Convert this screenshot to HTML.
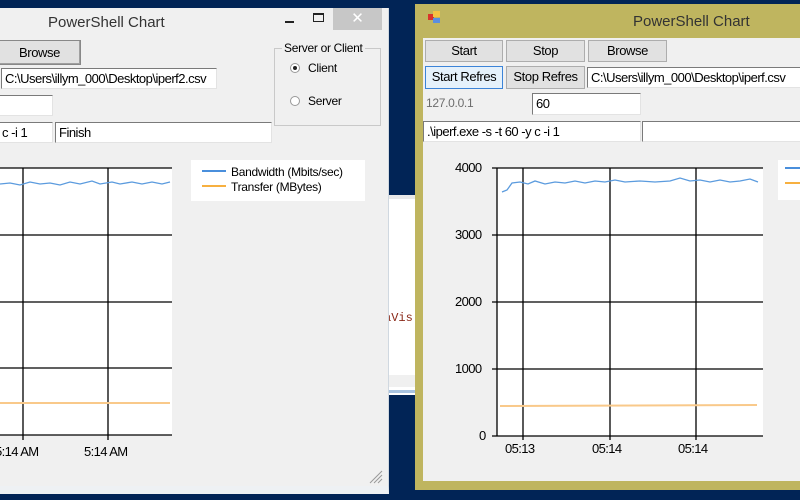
<!DOCTYPE html>
<html><head><meta charset="utf-8"><style>
*{margin:0;padding:0;box-sizing:border-box}
body{width:800px;height:500px;background:#012456;position:relative;overflow:hidden;font-family:"Liberation Sans",sans-serif;font-size:12px;color:#000}
.a{position:absolute}
.btn{position:absolute;background:#e1e1e1;border:1px solid #adadad;text-align:center;line-height:20px;font-size:13px;letter-spacing:-0.4px}
.tb{position:absolute;background:#fff;border:1px solid #7a7a7a;border-right-color:#e3e3e3;border-bottom-color:#e3e3e3;padding-left:3px;line-height:17px;white-space:nowrap;overflow:hidden;font-size:13px;letter-spacing:-0.5px}
.lbl{position:absolute;font-size:12px;letter-spacing:-0.3px}
</style></head><body>
<div class="a" style="left:386px;top:195px;width:32px;height:200px;background:#fff;border-top:4px solid #e8e8e8"></div>
<div class="a" style="left:386px;top:375px;width:32px;height:12px;background:#f0f0f0"></div>
<div class="a" style="left:386px;top:390px;width:32px;height:3px;background:#a8c3e0"></div>
<div class="a" style="left:384px;top:311px;color:#8b2a1a;font-family:'Liberation Mono',monospace;font-size:12px">aVis</div>
<div class="a" style="left:0;top:8px;width:389px;height:486px;background:#f0f0f0;border-right:1px solid #d0d8e0;border-bottom:8px solid #eef1f4"></div>
<div class="a" style="left:48px;top:14px;font-size:15px;color:#333">PowerShell Chart</div>
<div class="a" style="left:285px;top:21px;width:9px;height:2px;background:#222"></div>
<div class="a" style="left:313px;top:13px;width:11px;height:9px;border:1px solid #222;border-top-width:2px"></div>
<div class="a" style="left:333px;top:8px;width:49px;height:22px;background:#c7c7c7;color:#fff;text-align:center;font-size:15px;line-height:22px">✕</div>
<div class="btn" style="left:-2px;top:40px;width:83px;height:25px;line-height:23px;border-color:#888;box-shadow:inset -1px -1px #a0a0a0">Browse</div>
<div class="tb" style="left:1px;top:68px;width:216px;height:21px;line-height:19px">C:\Users\illym_000\Desktop\iperf2.csv</div>
<div class="tb" style="left:-2px;top:95px;width:55px;height:21px"></div>
<div class="tb" style="left:-2px;top:122px;width:55px;height:21px;line-height:19px">c -i 1</div>
<div class="tb" style="left:55px;top:122px;width:217px;height:21px;line-height:19px">Finish</div>
<div class="a" style="left:274px;top:48px;width:107px;height:78px;border:1px solid #c9c9c9"></div>
<div class="a" style="left:282px;top:41px;background:#f0f0f0;padding:0 2px;letter-spacing:-0.3px">Server or Client</div>
<div class="a" style="left:290px;top:63px;width:10px;height:10px;border-radius:50%;border:1px solid #999;background:#fff"></div>
<div class="a" style="left:293px;top:66px;width:4px;height:4px;border-radius:50%;background:#222"></div>
<div class="lbl" style="left:308px;top:61px">Client</div>
<div class="a" style="left:290px;top:96px;width:10px;height:10px;border-radius:50%;border:1px solid #999;background:#fff"></div>
<div class="lbl" style="left:308px;top:94px">Server</div>
<div class="a" style="left:191px;top:160px;width:174px;height:41px;background:#fff"></div>
<div class="lbl" style="left:231px;top:165px">Bandwidth (Mbits/sec)</div>
<div class="lbl" style="left:231px;top:180px">Transfer (MBytes)</div>
<div class="lbl" style="left:-5px;top:444px;font-size:13px;letter-spacing:-0.6px">5:14 AM</div>
<div class="lbl" style="left:84px;top:444px;font-size:13px;letter-spacing:-0.6px">5:14 AM</div>
<div class="a" style="left:415px;top:4px;width:390px;height:486px;background:#bfb55f"></div>
<div class="a" style="left:423px;top:38px;width:380px;height:443px;background:#f0f0f0"></div>
<div class="a" style="left:428px;top:14px;width:6px;height:6px;background:#d9342b"></div>
<div class="a" style="left:433px;top:11px;width:7px;height:6px;background:#f5c242"></div>
<div class="a" style="left:433px;top:18px;width:7px;height:5px;background:#5a8ee0"></div>
<div class="a" style="left:633px;top:13px;font-size:15px;color:#333">PowerShell Chart</div>
<div class="btn" style="left:425px;top:40px;width:78px;height:22px">Start</div>
<div class="btn" style="left:506px;top:40px;width:79px;height:22px">Stop</div>
<div class="btn" style="left:588px;top:40px;width:79px;height:22px">Browse</div>
<div class="btn" style="left:425px;top:66px;width:78px;height:23px;border-color:#3c84d8;background:#e5f1fb">Start Refres</div>
<div class="btn" style="left:506px;top:66px;width:79px;height:23px">Stop Refres</div>
<div class="tb" style="left:587px;top:67px;width:220px;height:21px;line-height:19px">C:\Users\illym_000\Desktop\iperf.csv</div>
<div class="lbl" style="left:426px;top:96px;color:#6d6d6d">127.0.0.1</div>
<div class="tb" style="left:532px;top:93px;width:109px;height:22px;line-height:20px">60</div>
<div class="tb" style="left:423px;top:121px;width:218px;height:21px;line-height:19px">.\iperf.exe -s -t 60 -y c -i 1</div>
<div class="tb" style="left:642px;top:121px;width:165px;height:21px"></div>
<div class="a" style="left:778px;top:160px;width:30px;height:40px;background:#fff"></div>
<div class="lbl" style="left:455px;top:160px;font-size:13px;letter-spacing:-0.6px">4000</div>
<div class="lbl" style="left:455px;top:227px;font-size:13px;letter-spacing:-0.6px">3000</div>
<div class="lbl" style="left:455px;top:294px;font-size:13px;letter-spacing:-0.6px">2000</div>
<div class="lbl" style="left:455px;top:361px;font-size:13px;letter-spacing:-0.6px">1000</div>
<div class="lbl" style="left:479px;top:428px;font-size:13px">0</div>
<div class="lbl" style="left:505px;top:441px;font-size:13px;letter-spacing:-0.6px">05:13</div>
<div class="lbl" style="left:592px;top:441px;font-size:13px;letter-spacing:-0.6px">05:14</div>
<div class="lbl" style="left:678px;top:441px;font-size:13px;letter-spacing:-0.6px">05:14</div>
<svg class="a" style="left:0;top:0" width="800" height="500">
<rect x="0" y="168" width="172" height="267" fill="#fff"/>
<g stroke="#000" stroke-width="1.3">
<line x1="0" y1="168" x2="172" y2="168"/><line x1="0" y1="235" x2="172" y2="235"/><line x1="0" y1="302" x2="172" y2="302"/><line x1="0" y1="368" x2="172" y2="368"/><line x1="0" y1="435" x2="172" y2="435"/>
<line x1="23" y1="168" x2="23" y2="440"/><line x1="108" y1="168" x2="108" y2="440"/>
</g>
<polyline fill="none" stroke="#5b9bde" stroke-width="1.3" points="0,184 10,183 20,185 30,182 40,184 50,183 60,185 70,182 80,184 92,181 100,184 112,182 120,184 132,182 142,184 152,182 162,184 170,182"/>
<line x1="0" y1="403" x2="170" y2="403" stroke="#f9c98a" stroke-width="2"/>
<line x1="202" y1="171" x2="226" y2="171" stroke="#4a8fdc" stroke-width="2"/>
<line x1="202" y1="186" x2="226" y2="186" stroke="#f7b040" stroke-width="2"/>
<rect x="497" y="168" width="266" height="268" fill="#fff"/>
<g stroke="#000" stroke-width="1.3">
<line x1="492" y1="168" x2="763" y2="168"/><line x1="492" y1="235" x2="763" y2="235"/><line x1="492" y1="302" x2="763" y2="302"/><line x1="492" y1="369" x2="763" y2="369"/><line x1="492" y1="436" x2="763" y2="436"/>
<line x1="497" y1="168" x2="497" y2="436"/>
<line x1="523" y1="168" x2="523" y2="440"/><line x1="610" y1="168" x2="610" y2="440"/><line x1="696" y1="168" x2="696" y2="440"/>
</g>
<polyline fill="none" stroke="#5b9bde" stroke-width="1.3" points="502,192 507,190 512,183 520,182 528,184 535,181 545,184 555,182 565,183 575,181 585,183 595,181 605,182 615,180 625,182 640,181 655,182 670,181 680,178 690,181 700,180 710,182 720,180 730,182 740,181 750,179 758,182"/>
<line x1="500" y1="406" x2="757" y2="405" stroke="#f9c98a" stroke-width="2"/>
<line x1="785" y1="168" x2="800" y2="168" stroke="#4a8fdc" stroke-width="2"/>
<line x1="785" y1="183" x2="800" y2="183" stroke="#f7b040" stroke-width="2"/>
<g stroke="#999" stroke-width="1"><line x1="370" y1="483" x2="382" y2="471"/><line x1="374" y1="483" x2="382" y2="475"/><line x1="378" y1="483" x2="382" y2="479"/></g>
</svg>
</body></html>
